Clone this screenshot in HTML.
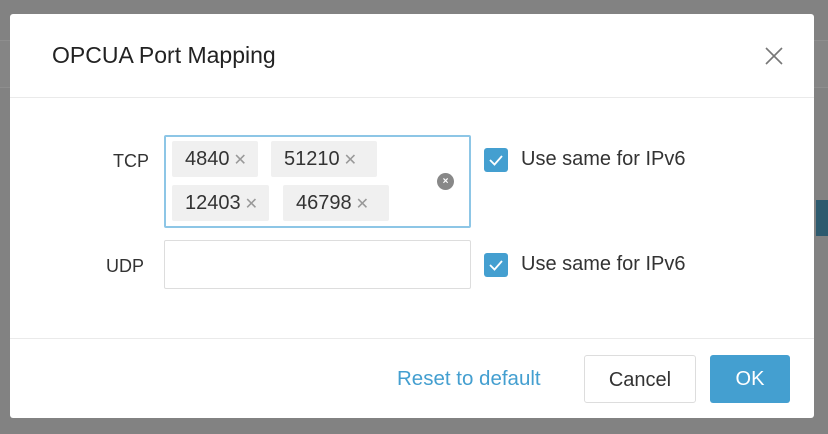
<!DOCTYPE html>
<html><head><style>
*{box-sizing:border-box;margin:0;padding:0}
body{width:828px;height:434px;background:#828282;position:relative;overflow:hidden;font-family:"Liberation Sans",sans-serif;color:#333}
.bg1{position:absolute;left:0;top:40px;width:828px;height:48px;background:#858585;border-top:1px solid #8e8e8e;border-bottom:1px solid #8e8e8e}
.bg2{position:absolute;left:816px;top:200px;width:12px;height:36px;background:#2d5a6e}
.modal{position:absolute;left:10px;top:14px;width:804px;height:404px;background:#fff;border-radius:3px}
.title{position:absolute;left:42px;top:28px;font-size:23px;color:#222;letter-spacing:0px}
.hd{position:absolute;left:0;top:83px;width:100%;height:1px;background:#eaeaea}
.fd{position:absolute;left:0;top:324px;width:100%;height:1px;background:#eaeaea}
.lbl{position:absolute;font-size:18px;color:#333}
.box{position:absolute;border:1px solid #ddd;border-radius:2px}
.tag{position:absolute;height:36px;background:#f0f0f0;border-radius:2px;font-size:20px;line-height:36px;padding-left:13px;color:#333}
.tag span{color:#999;font-size:16px;margin-left:4px}
.cb{position:absolute;width:24px;height:24px;background:#449fd0;border-radius:3px}
.ct{position:absolute;font-size:20px;color:#333}
.btn{position:absolute;height:48px;border-radius:3px;font-size:20px;line-height:48px;text-align:center}
</style></head><body>
<div class="bg1"></div><div class="bg2"></div>
<div class="modal">
<div class="title">OPCUA Port Mapping</div>
<svg style="position:absolute;left:755px;top:33px" width="18" height="18"><path d="M1 1L17 17M17 1L1 17" stroke="#777" stroke-width="1.6"/></svg>
<div class="hd"></div>
<div class="lbl" style="left:103px;top:137px">TCP</div>
<div class="box" style="left:154px;top:121px;width:307px;height:93px;border:2px solid #8dc6e6"></div>
<div class="tag" style="left:162px;top:127px;width:86px">4840<span>✕</span></div>
<div class="tag" style="left:261px;top:127px;width:106px">51210<span>✕</span></div>
<div class="tag" style="left:162px;top:171px;width:97px">12403<span>✕</span></div>
<div class="tag" style="left:273px;top:171px;width:106px">46798<span>✕</span></div>
<div style="position:absolute;left:427px;top:159px;width:17px;height:17px;border-radius:50%;background:#888;color:#fff;font-size:10px;line-height:17px;text-align:center;font-weight:bold">×</div>
<div class="cb" style="left:474px;top:134px"><svg width="24" height="24"><path d="M6 12L10.5 16.5L18 8" stroke="#fff" stroke-width="1.8" fill="none"/></svg></div>
<div class="ct" style="left:511px;top:134px">Use same for IPv6</div>
<div class="lbl" style="left:96px;top:242px">UDP</div>
<div class="box" style="left:154px;top:226px;width:307px;height:49px"></div>
<div class="cb" style="left:474px;top:239px"><svg width="24" height="24"><path d="M6 12L10.5 16.5L18 8" stroke="#fff" stroke-width="1.8" fill="none"/></svg></div>
<div class="ct" style="left:511px;top:239px">Use same for IPv6</div>
<div class="fd"></div>
<div style="position:absolute;left:387px;top:353px;font-size:20.5px;color:#449fd0">Reset to default</div>
<div class="btn" style="left:574px;top:341px;width:112px;border:1px solid #ddd;color:#333">Cancel</div>
<div class="btn" style="left:700px;top:341px;width:80px;background:#449fd0;color:#fff">OK</div>
</div>
</body></html>
